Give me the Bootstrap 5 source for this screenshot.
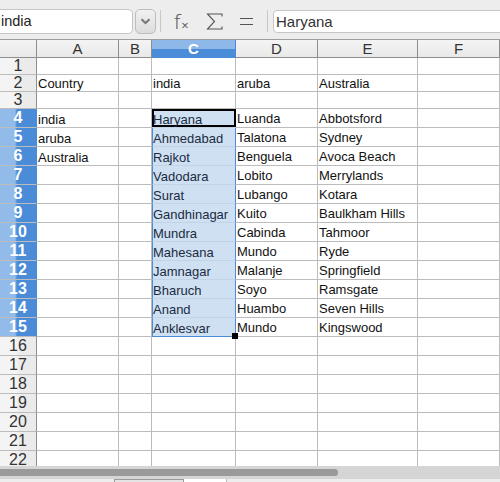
<!DOCTYPE html>
<html lang="en">
<head>
<meta charset="utf-8">
<title>Spreadsheet</title>
<link href="https://cdn.jsdelivr.net/npm/bootstrap@5.3.0/dist/css/bootstrap.min.css" rel="stylesheet">
<style>
html,body{margin:0;height:482px;overflow:hidden;background:#ededed}
body{font-family:"Liberation Sans",Arial,sans-serif}
.app{width:500px;height:482px;overflow:hidden}
.fbar{height:40px;flex:none;background:#ededed;border-bottom:1px solid #9d9d9d;padding-top:3px}
.namebox{width:133px;height:25px;background:#fff;border:1px solid #c6c6c6;border-left:0;border-radius:0 5px 5px 0;font-size:14.5px;line-height:23px;padding-left:1px;color:#222}
.dropbtn{width:21px;height:25px;margin-left:2px;border:1px solid #bdbdbd;border-radius:5px;background:linear-gradient(#f1f1f1,#dcdcdc)}
.vsep{width:1px;height:22px;background:#c8c8c8}
.fx{width:20px;color:#555;font-family:"Open Sans",sans-serif;font-weight:300;font-size:21px;line-height:24px;margin:-1px 0 0 13px;white-space:nowrap}
.fx sub{font-size:13px;bottom:-.1em;font-weight:400;margin-left:1px}
.tbtn{display:block;flex:none}
.sigma{margin-left:12px}
.eqs{margin-left:17px}
.sep2{margin-left:13px}
.formula{flex:1 0 240px;height:23px;margin:0 -20px 0 5px;background:#fff;border:1px solid #c6c6c6;border-radius:4px;font-size:15px;line-height:21px;padding-left:2px;color:#333}
.sheetwrap{flex:1 1 auto;min-height:0;overflow:hidden;background:#fff}
.sheet{table-layout:fixed;border-collapse:separate;border-spacing:0;width:500px;font-size:13px;color:#111}
.sheet td,.sheet th{padding:0;border-right:1px solid #bcbcbc;border-bottom:1px solid #bcbcbc;overflow:hidden;white-space:nowrap;line-height:1;font-weight:400;vertical-align:middle}
.sheet td{padding-left:1px}
.c0{width:37px}.c1{width:82px}.c2{width:33px}.c3{width:84px}.c4{width:82px}.c5{width:100px}.c6{width:82px}
.colhead th{height:18px;background:linear-gradient(#f4f4f4,#e9e9e9);text-align:center;font-size:15px;color:#333;border-right-color:#8e8e8e;border-bottom-color:#8e8e8e}
.colhead .act{background:linear-gradient(#8db8e8 0,#8db8e8 9px,#4a8cd8 9px);color:#fff;font-weight:700;border-right-color:#4a8cd8;border-bottom-color:#4a8cd8}
.sheet tbody th{background:linear-gradient(90deg,#f4f4f4 16px,#ebebeb 20px);text-align:center;font-size:16px;color:#333;border-right-color:#8e8e8e}
.sheet tbody th.act{background:linear-gradient(90deg,#92bbe9 15px,#4a8cd8 17px);color:#fff;font-weight:700;border-right-color:#4a8cd8;border-bottom-color:#bcbcbc}
.rs{height:17px}
.rt{height:19px}
.sheet td.sel{background:#cfe0f3;color:#1b2b40;padding-left:0;border-left:1px solid #4a8cd8;border-right:1px solid #4a8cd8;border-bottom-color:#c3d3e6}
.sheet td.sel .pad{padding-top:2px}
.sheet td.cur{box-shadow:inset 0 0 0 2px #000;border-left:0;border-right:0;position:relative}
.sheet td.cur .pad{padding:3px 0 0 1px}
.sheet td.end{border-bottom-color:#4a8cd8;position:relative;overflow:visible}
.handle{position:absolute;right:-3px;bottom:-3px;width:6px;height:6px;background:#000;z-index:2;border:0}
.mv{padding-left:2px}
.sheet td.low{padding-top:2px}
.hb{height:13px;flex:none;background:#d5d5d5;padding-top:3px}
.hb i{display:block;width:338px;height:7px;background:#9a9a9a;border-radius:0 3px 3px 0}
.tabs{height:3px;flex:none;background:#ededed;padding-left:114px}
.tab1{width:70px;height:3px;border:1px solid #9a9a9a;border-bottom:0;background:#e4e4e4}
.tab2{width:43px;height:3px;background:#fff;border-right:1px solid #bbb}
</style>
</head>
<body>
<div class="app d-flex flex-column">
  <div class="fbar d-flex align-items-center">
    <div class="namebox flex-none">india</div>
    <div class="dropbtn d-flex align-items-center justify-content-center flex-none">
      <svg width="11" height="7" viewBox="0 0 11 7"><path d="M1.5 1.2 5.5 5 9.5 1.2" fill="none" stroke="#777" stroke-width="2"/></svg>
    </div>
    <div class="vsep flex-none ms-1"></div>
    <div class="fx">f<sub>×</sub></div>
    <svg class="tbtn sigma" width="17" height="17" viewBox="0 0 17 17"><path d="M16 3.5V1H1.5L8.5 8.5 1.5 16H16v-2.5" fill="none" stroke="#555" stroke-width="1.1"/></svg>
    <svg class="tbtn eqs" width="14" height="9" viewBox="0 0 14 9"><path d="M0 1.5h13M0 7.5h13" stroke="#555" stroke-width="1.2"/></svg>
    <div class="vsep flex-none sep2"></div>
    <div class="formula">Haryana</div>
  </div>
  <div class="sheetwrap">
    <table class="sheet">
      <thead><tr class="colhead"><th class="c0"></th><th class="c1">A</th><th class="c2">B</th><th class="c3 act">C</th><th class="c4">D</th><th class="c5">E</th><th class="c6">F</th></tr></thead>
      <tbody>
        <tr class="rs"><th>1</th><td></td><td></td><td></td><td></td><td></td><td></td></tr>
        <tr class="rs"><th>2</th><td>Country</td><td></td><td>india</td><td>aruba</td><td>Australia</td><td></td></tr>
        <tr class="rs"><th>3</th><td></td><td></td><td></td><td></td><td></td><td></td></tr>
        <tr class="rt"><th class="act">4</th><td class="low">india</td><td></td><td class="sel cur"><div class="pad">Haryana</div></td><td class="mv">Luanda</td><td class="mv">Abbotsford</td><td></td></tr>
        <tr class="rt"><th class="act">5</th><td class="low">aruba</td><td></td><td class="sel"><div class="pad">Ahmedabad</div></td><td class="mv">Talatona</td><td class="mv">Sydney</td><td></td></tr>
        <tr class="rt"><th class="act">6</th><td class="low">Australia</td><td></td><td class="sel"><div class="pad">Rajkot</div></td><td class="mv">Benguela</td><td class="mv">Avoca Beach</td><td></td></tr>
        <tr class="rt"><th class="act">7</th><td></td><td></td><td class="sel"><div class="pad">Vadodara</div></td><td class="mv">Lobito</td><td class="mv">Merrylands</td><td></td></tr>
        <tr class="rt"><th class="act">8</th><td></td><td></td><td class="sel"><div class="pad">Surat</div></td><td class="mv">Lubango</td><td class="mv">Kotara</td><td></td></tr>
        <tr class="rt"><th class="act">9</th><td></td><td></td><td class="sel"><div class="pad">Gandhinagar</div></td><td class="mv">Kuito</td><td class="mv">Baulkham Hills</td><td></td></tr>
        <tr class="rt"><th class="act">10</th><td></td><td></td><td class="sel"><div class="pad">Mundra</div></td><td class="mv">Cabinda</td><td class="mv">Tahmoor</td><td></td></tr>
        <tr class="rt"><th class="act">11</th><td></td><td></td><td class="sel"><div class="pad">Mahesana</div></td><td class="mv">Mundo</td><td class="mv">Ryde</td><td></td></tr>
        <tr class="rt"><th class="act">12</th><td></td><td></td><td class="sel"><div class="pad">Jamnagar</div></td><td class="mv">Malanje</td><td class="mv">Springfield</td><td></td></tr>
        <tr class="rt"><th class="act">13</th><td></td><td></td><td class="sel"><div class="pad">Bharuch</div></td><td class="mv">Soyo</td><td class="mv">Ramsgate</td><td></td></tr>
        <tr class="rt"><th class="act">14</th><td></td><td></td><td class="sel"><div class="pad">Anand</div></td><td class="mv">Huambo</td><td class="mv">Seven Hills</td><td></td></tr>
        <tr class="rt"><th class="act">15</th><td></td><td></td><td class="sel end"><div class="pad">Anklesvar</div><span class="handle"></span></td><td class="mv">Mundo</td><td class="mv">Kingswood</td><td></td></tr>
        <tr class="rt"><th>16</th><td></td><td></td><td></td><td></td><td></td><td></td></tr>
        <tr class="rt"><th>17</th><td></td><td></td><td></td><td></td><td></td><td></td></tr>
        <tr class="rt"><th>18</th><td></td><td></td><td></td><td></td><td></td><td></td></tr>
        <tr class="rt"><th>19</th><td></td><td></td><td></td><td></td><td></td><td></td></tr>
        <tr class="rt"><th>20</th><td></td><td></td><td></td><td></td><td></td><td></td></tr>
        <tr class="rt"><th>21</th><td></td><td></td><td></td><td></td><td></td><td></td></tr>
        <tr class="rt"><th>22</th><td></td><td></td><td></td><td></td><td></td><td></td></tr>
      </tbody>
    </table>
  </div>
  <div class="hb"><i></i></div>
  <div class="tabs d-flex"><div class="tab1"></div><div class="tab2"></div></div>
</div>
<script src="https://cdn.jsdelivr.net/npm/bootstrap@5.3.0/dist/js/bootstrap.bundle.min.js"></script>
</body>
</html>
